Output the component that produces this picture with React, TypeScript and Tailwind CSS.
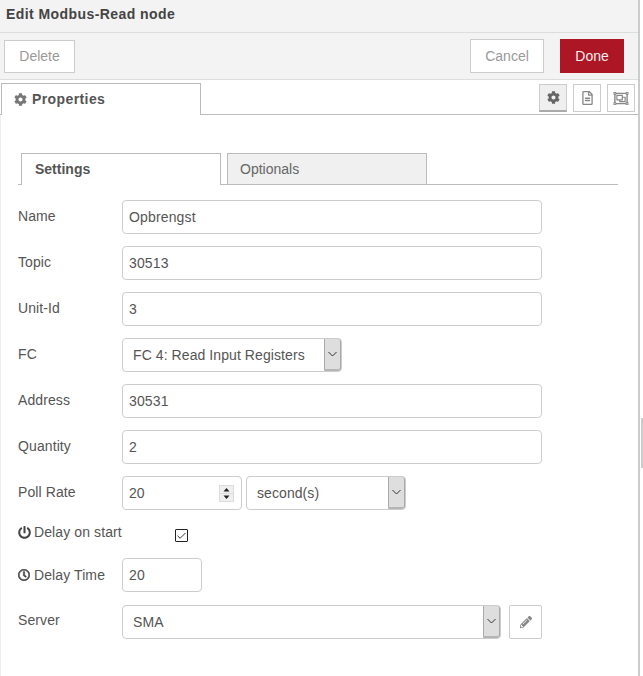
import React from 'react'
import { FaCog, FaPencilAlt, FaPowerOff, FaRegClock, FaRegFileAlt, FaRegObjectGroup } from 'react-icons/fa'
import { Check } from 'lucide-react'

const Label = ({ children, className = '-mt-[2px]' }: { children: React.ReactNode; className?: string }) => (
    <label className={`${className} w-[104px] shrink-0 text-[14px] leading-[20px] tracking-[0.1px] text-[#555] flex items-center`}>
        {children}
    </label>
)

const TextInput = ({ value, className = 'w-[420px]' }: { value: string; className?: string }) => (
    <input
        readOnly
        value={value}
        className={`${className} h-[34px] px-[6px] border border-[#ccc] rounded-[4px] bg-white text-[14px] tracking-[0.15px] text-[#555] outline-none`}
    />
)

const SelectBox = ({ value, className }: { value: string; className: string }) => (
    <div className={`${className} h-[34px] flex border border-[#ccc] rounded-[4px] bg-white text-[14px] tracking-[0.08px] text-[#555]`}>
        <span className="flex-1 pl-[10px] leading-[32px]">{value}</span>
        <span className="w-[17px] flex items-center justify-center bg-[#dedede] border-x border-x-[#aaa] border-b-2 border-b-[#b5b5b5] rounded-r-[3px]">
            <svg width="9" height="6" viewBox="0 0 9 6" fill="none">
                <path d="M0.5 1 L4.5 5 L8.5 1" stroke="#333" strokeWidth="1" />
            </svg>
        </span>
    </div>
)

const Row = ({ label, labelClass, className = 'mb-[12px]', children }: { label: React.ReactNode; labelClass?: string; className?: string; children: React.ReactNode }) => (
    <div className={`flex items-center ${className}`}>
        <Label className={labelClass}>{label}</Label>
        {children}
    </div>
)

export default function App() {
    return (
        <div className="w-[643px] h-[676px] overflow-hidden bg-white flex font-['Liberation_Sans',Arial,sans-serif]">
            <div className="w-[640px] h-full border-r-2 border-r-[#ccc] flex flex-col shrink-0">
                {/* Tray header */}
                <div className="h-[33px] bg-[#f3f3f3] border-b border-[#ddd] pl-[6px] text-[14px] leading-[28px] font-bold tracking-[0.43px] text-[#444]">
                    Edit Modbus-Read node
                </div>
                <div className="h-[47px] bg-[#f3f3f3] border-b border-[#ddd] flex items-start pt-[6px] pl-[4px] text-[14px]">
                    <button className="mt-[1px] w-[71px] h-[33px] bg-white border border-[#ccc] text-[#999]">Delete</button>
                    <button className="ml-auto w-[74px] h-[34px] bg-white border border-[#ccc] text-[#999]">Cancel</button>
                    <button className="ml-[16px] mr-[14px] w-[64px] h-[34px] bg-[#ad1625] text-[#eee]">Done</button>
                </div>

                {/* Tray tabs */}
                <div className="h-[35px] border-b border-[#bbb] flex items-end relative">
                    <div className="ml-[1px] -mb-[1px] w-[200px] h-[32px] bg-white border border-[#bbb] border-b-0 flex items-center pl-[12px] gap-[5px] text-[14px] font-bold tracking-[0.4px] text-[#555]">
                        <FaCog className="w-[13px] h-[13px] text-[#777]" />
                        Properties
                    </div>
                    <div className="absolute right-[3px] top-[4px] flex gap-[6px]">
                        <span className="w-[28px] h-[28px] bg-[#efefef] border border-[#ccc] border-b-2 border-b-[#aaa] flex items-center justify-center">
                            <FaCog className="w-[13px] h-[13px] text-[#666]" />
                        </span>
                        <span className="w-[28px] h-[28px] bg-white border border-[#ccc] flex items-center justify-center">
                            <FaRegFileAlt className="w-[13px] h-[14px] text-[#888]" />
                        </span>
                        <span className="w-[28px] h-[28px] bg-white border border-[#ccc] flex items-center justify-center">
                            <FaRegObjectGroup className="w-[16px] h-[15px] text-[#888]" />
                        </span>
                    </div>
                </div>

                {/* Form */}
                <div className="flex-1 border-l border-l-[#eee] pl-[17px] pt-[38px]">
                    <div className="w-[600px] h-[32px] border-b border-[#bbb] flex pl-[3px] gap-[6px] text-[14px] mb-[15px]">
                        <div className="w-[200px] h-[32px] bg-white border border-[#bbb] border-b-0 pl-[13px] leading-[31px] font-bold text-[#555]">
                            Settings
                        </div>
                        <div className="w-[200px] h-[31px] bg-[#f0f0f0] border border-[#bbb] border-b-0 pl-[12px] leading-[31px] text-[#666]">
                            Optionals
                        </div>
                    </div>

                    <Row label="Name"><TextInput value="Opbrengst" /></Row>
                    <Row label="Topic"><TextInput value="30513" /></Row>
                    <Row label="Unit-Id"><TextInput value="3" /></Row>
                    <Row label="FC"><SelectBox value="FC 4: Read Input Registers" className="w-[220px]" /></Row>
                    <Row label="Address"><TextInput value="30531" /></Row>
                    <Row label="Quantity"><TextInput value="2" /></Row>
                    <Row label="Poll Rate">
                        <div className="w-[120px] h-[34px] flex items-center pl-[6px] pr-[7px] border border-[#ccc] rounded-[4px] text-[14px] text-[#555]">
                            <span className="flex-1">20</span>
                            <svg width="15" height="17" viewBox="0 0 15 17">
                                <rect width="15" height="17" fill="#dcdcdc" />
                                <rect x="1" y="1" width="13" height="7" fill="#efefef" />
                                <rect x="1" y="9" width="13" height="7" fill="#efefef" />
                                <path d="M7.5 3 L10.5 6.5 H4.5 Z M4.5 10.5 H10.5 L7.5 14 Z" fill="#222" />
                            </svg>
                        </div>
                        <SelectBox value="second(s)" className="ml-[4px] w-[160px]" />
                    </Row>
                    <div className="flex items-center h-[36px]">
                        <Label className="-mt-[16px]">
                            <FaPowerOff className="w-[13px] h-[13px] mr-[3px] text-[#444]" />
                            <span className="whitespace-nowrap">Delay on start</span>
                        </Label>
                        <span className="ml-[53px] -mt-[9px] w-[13px] h-[13px] border border-[#222] rounded-[1px] bg-white flex items-center justify-center">
                            <Check className="w-[12px] h-[12px] text-[#222]" strokeWidth={2} />
                        </span>
                    </div>
                    <Row
                        labelClass="mt-0"
                        className="mb-[13px]"
                        label={<><FaRegClock className="w-[12px] h-[12px] mr-[4px] text-[#444] stroke-[24px]" /><span className="whitespace-nowrap">Delay Time</span></>}
                    >
                        <TextInput value="20" className="w-[80px]" />
                    </Row>
                    <Row label="Server" labelClass="-mt-[4px]">
                        <SelectBox value="SMA" className="w-[379px]" />
                        <button className="ml-[8px] w-[33px] h-[34px] border border-[#ccc] rounded-[2px] bg-white flex items-center justify-center">
                            <FaPencilAlt className="w-[12px] h-[12px] text-[#888]" />
                        </button>
                    </Row>
                </div>
            </div>

            {/* Scrollbar */}
            <div className="flex-1 pt-[418px] pl-[1px]">
                <div className="w-[2px] h-[50px] bg-[#ccc]" />
            </div>
        </div>
    )
}
